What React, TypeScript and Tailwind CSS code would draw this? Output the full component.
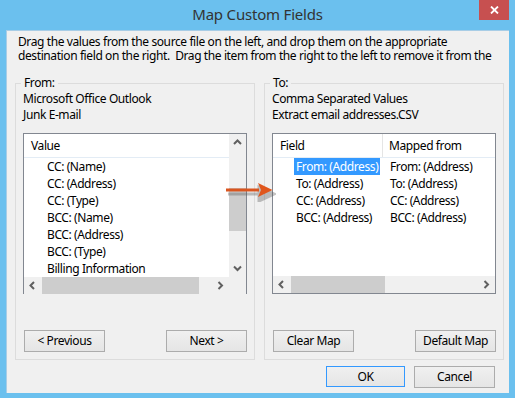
import React from 'react'

const Chevron = ({ dir }: { dir: 'up' | 'down' | 'left' | 'right' }) => {
    const d = {
        up: 'M1 5 L4.5 1.5 L8 5',
        down: 'M1 1.5 L4.5 5 L8 1.5',
        left: 'M5 1 L1.5 4.5 L5 8',
        right: 'M1.5 1 L5 4.5 L1.5 8',
    }[dir]
    const vertical = dir === 'up' || dir === 'down'
    return (
        <svg width={vertical ? 9 : 7} height={vertical ? 7 : 9} viewBox={vertical ? '0 0 9 7' : '0 0 7 9'}>
            <path d={d} fill="none" stroke="#606060" strokeWidth="2" />
        </svg>
    )
}

const HScroll = ({ thumbLeft, thumbWidth }: { thumbLeft: number; thumbWidth: number }) => (
    <div className="flex items-center h-[17px] bg-[#f0f0f0]">
        <div className="w-[17px] flex justify-center"><Chevron dir="left" /></div>
        <div className="flex-1 h-full relative">
            <div className="absolute top-0 h-full bg-[#cdcdcd]" style={{ left: thumbLeft, width: thumbWidth }} />
        </div>
        <div className="w-[17px] flex justify-center"><Chevron dir="right" /></div>
    </div>
)

const WinButton = ({ label, primary }: { label: string; primary?: boolean }) => (
    <button type="button"
        className={`border ${primary ? 'border-[#3399ff] w-[79px] h-[21px]' : 'border-[#acacac] w-[81px] h-[22px]'} bg-linear-to-b from-[#f0f0f0] to-[#e5e5e5] text-[12px] leading-none text-black`}>
        {label}
    </button>
)

const GroupBox = ({ legend, lines, children, buttons }: {
    legend: string; lines: string[]; children: React.ReactNode; buttons: [string, string]
}) => (
    <div className="relative w-[240px] h-[277px] border border-[#dcdcdc] pl-[7px] pt-[7px]">
        <span className="absolute -top-[9px] left-[5px] px-[3px] bg-[#f0f0f0] leading-4 text-[12px]">{legend}</span>
        {lines.map(l => (
            <div key={l} className="leading-4 text-[12px] whitespace-nowrap">{l}</div>
        ))}
        <div className="mt-[10px] w-[224px] h-[161px] border border-[#828790] bg-white">
            {children}
        </div>
        <div className="mt-[36px] ml-[1px] w-[223px] flex justify-between">
            <WinButton label={buttons[0]} />
            <WinButton label={buttons[1]} />
        </div>
    </div>
)

const values = ['CC: (Name)', 'CC: (Address)', 'CC: (Type)', 'BCC: (Name)', 'BCC: (Address)', 'BCC: (Type)', 'Billing Information']
const mapped = ['From: (Address)', 'To: (Address)', 'CC: (Address)', 'BCC: (Address)']

const App: React.FC = () => {
    return (
        <div className="relative w-[515px] h-[398px] bg-[#6bc0ee] flex flex-col font-['Noto_Sans',sans-serif] tracking-[-0.4px] text-black">
            {/* title bar */}
            <div className="relative h-[30px] flex items-center justify-center">
                <span className="text-[15px] text-[#333333] -mt-[1px] tracking-[-0.2px]">Map Custom Fields</span>
                <div className="absolute right-[6px] top-0 w-[30px] h-[20px] bg-[#c75050] flex items-center justify-center">
                    <svg width="9" height="8" viewBox="0 0 9 8">
                        <path d="M1 0.5 L8 7.5 M8 0.5 L1 7.5" stroke="white" strokeWidth="1.8" />
                    </svg>
                </div>
            </div>

            <div className="mx-[6px] h-[363px] bg-[#f0f0f0] border-l border-t border-[#a8cde6] flex flex-col">
                <div className="pl-[11px] pt-[4px] pr-[4px] text-[12px] leading-[14px] whitespace-pre">
                    <div>Drag the values from the source file on the left, and drop them on the appropriate</div>
                    <div>destination field on the right.  Drag the item from the right to the left to remove it from the</div>
                </div>

                <div className="flex gap-[9px] ml-[8px] mt-[20px]">
                    <GroupBox legend="From:" lines={['Microsoft Office Outlook', 'Junk E-mail']} buttons={['< Previous', 'Next >']}>
                        <div className="grid grid-cols-[1fr_17px] grid-rows-[143px_17px] h-full">
                            <div className="flex flex-col text-[12px]">
                                <div className="h-[24px] border-b border-[#e3ecf5] pl-[7px] flex items-center">Value</div>
                                {values.map(v => (
                                    <div key={v} className="h-[17px] leading-[17px] pl-[23px] whitespace-nowrap">{v}</div>
                                ))}
                            </div>
                            <div className="bg-[#f0f0f0] flex flex-col items-center">
                                <div className="h-[17px] flex items-center"><Chevron dir="up" /></div>
                                <div className="flex-1 w-full relative">
                                    <div className="absolute left-0 right-0 top-[37px] h-[43px] bg-[#cdcdcd]" />
                                </div>
                                <div className="h-[17px] flex items-center"><Chevron dir="down" /></div>
                            </div>
                            <div className="col-span-2 bg-[#f0f0f0] flex">
                                <div className="w-[205px]"><HScroll thumbLeft={1} thumbWidth={157} /></div>
                            </div>
                        </div>
                    </GroupBox>

                    <GroupBox legend="To:" lines={['Comma Separated Values', 'Extract email addresses.CSV']} buttons={['Clear Map', 'Default Map']}>
                        <div className="flex flex-col h-full">
                            <div className="flex-1 text-[12px]">
                                <div className="h-[24px] border-b border-[#e3ecf5] flex">
                                    <div className="w-[110px] border-r border-[#e5e5e5] pl-[7px] flex items-center">Field</div>
                                    <div className="pl-[6px] flex items-center">Mapped from</div>
                                </div>
                                {mapped.map((m, i) => (
                                    <div key={m} className="h-[17px] flex whitespace-nowrap">
                                        <div className="w-[111px] pl-[21px]">
                                            <span className={`inline-block h-[17px] leading-[17px] px-[2px] ${i === 0 ? 'bg-[#3399ff] text-white' : ''}`}>{m}</span>
                                        </div>
                                        <div className="pl-[6px] leading-[17px]">{m}</div>
                                    </div>
                                ))}
                            </div>
                            <HScroll thumbLeft={1} thumbWidth={94} />
                        </div>
                    </GroupBox>
                </div>

                <div className="flex justify-end gap-[9px] mr-[14px] mt-[6px]">
                    <WinButton label="OK" primary />
                    <WinButton label="Cancel" primary={false} />
                </div>
            </div>

            {/* drag arrow */}
            <svg className="absolute left-[224px] top-[180px]" width="52" height="22" viewBox="0 0 52 22">
                <path d="M3 12 H36 M34 5 L49 12 L34 19 Z" fill="#555" stroke="#555" strokeWidth="3" opacity="0.35" transform="translate(1 2)" />
                <path d="M2 10 H35" stroke="#d9551f" strokeWidth="3" />
                <path d="M34 3 L48.5 10 L34 17 L37 10 Z" fill="#e0561c" />
            </svg>
        </div>
    )
}

export default App
